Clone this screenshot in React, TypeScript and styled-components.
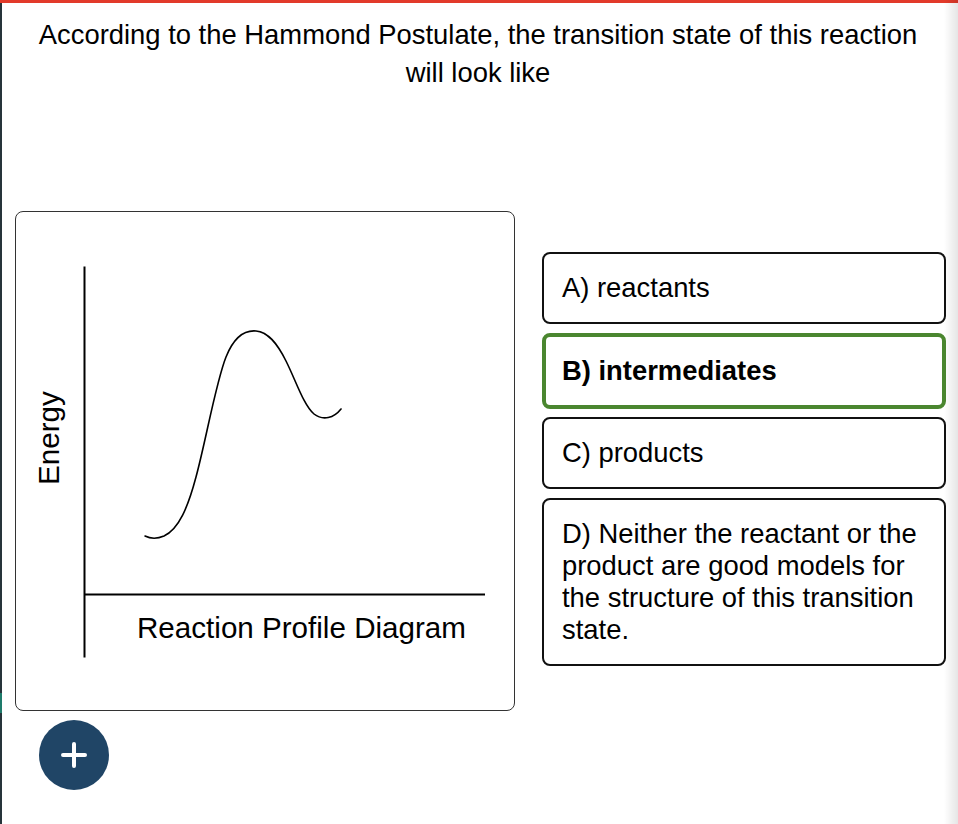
import React from "react";
import styled, { createGlobalStyle } from "styled-components";

const GlobalStyle = createGlobalStyle`
  * { box-sizing: border-box; }
  html, body { margin: 0; padding: 0; background: #ffffff; }
  body { font-family: "Liberation Sans", Arial, sans-serif; color: #000; }
`;

const Page = styled.div`
  position: relative;
  display: flex;
  flex-direction: column;
  width: 958px;
  height: 824px;
  overflow: hidden;
  background: #fff;
`;

const TopBar = styled.div`
  height: 3px;
  flex: 0 0 3px;
  background: #e23a2a;
`;

const Body = styled.div`
  flex: 1;
  display: flex;
  flex-direction: row;
`;

const SideRail = styled.div`
  width: 2px;
  flex: 0 0 2px;
  display: flex;
  flex-direction: column;
`;

const RailSegment = styled.div<{ $color: string; $height?: number }>`
  background: ${(p) => p.$color};
  ${(p) => (p.$height ? `flex: 0 0 ${p.$height}px;` : "flex: 1;")}
`;

const EdgeShade = styled.div`
  position: absolute;
  top: 0;
  right: 0;
  bottom: 0;
  width: 14px;
  pointer-events: none;
  background: linear-gradient(to right, rgba(0, 0, 0, 0), rgba(0, 0, 0, 0.1));
`;

const Main = styled.main`
  flex: 1;
  display: flex;
  flex-direction: column;
  padding-right: 4px;
`;

const Title = styled.h1`
  margin: 13px auto 0;
  max-width: 900px;
  font-size: 27.4px;
  line-height: 38px;
  font-weight: normal;
  text-align: center;
`;

const ContentRow = styled.div`
  display: flex;
  flex-direction: row;
  align-items: flex-start;
  gap: 27px;
  margin: 119px 0 0 13px;
`;

const DiagramCard = styled.div`
  width: 500px;
  height: 500px;
  border: 1px solid #333;
  border-radius: 8px;
  overflow: hidden;
  background: #fff;
  display: flex;
`;

const Options = styled.div`
  width: 404px;
  margin-top: 41px;
  display: flex;
  flex-direction: column;
  gap: 8.7px;
`;

const Option = styled.div<{ $selected?: boolean }>`
  border: ${(p) => (p.$selected ? "4px solid #4a862f" : "2px solid #111")};
  border-radius: 8px;
  padding: ${(p) => (p.$selected ? "18px 16px" : "18px 18px")};
  font-size: 27.4px;
  line-height: 32px;
  font-weight: ${(p) => (p.$selected ? "bold" : "normal")};
  background: #fff;
`;

const PlusButton = styled.button`
  margin: 9px 0 0 37px;
  width: 70px;
  height: 70px;
  border-radius: 50%;
  border: none;
  padding: 0;
  background: #204566;
  display: flex;
  align-items: center;
  justify-content: center;
  cursor: pointer;
`;

const DiagramText = styled.text`
  font-family: "Liberation Sans", Arial, sans-serif;
  font-size: 29.6px;
  fill: #000;
`;

const curvePath =
  "M129,324 C135,327 141,327 148,324 C163,317 172,295 180,265 " +
  "C190,228 200,170 210,145 C218,125 228,118 240,119 " +
  "C252,120 261,131 270,149 C280,169 288,194 298,202 " +
  "C307,209 318,206 325,197";

const ReactionDiagram: React.FC = () => (
  <svg width="498" height="498" viewBox="0 0 498 498">
    <line x1="68.5" y1="54.5" x2="68.5" y2="445.5" stroke="#000" strokeWidth="2" />
    <line x1="68.5" y1="382.5" x2="469" y2="382.5" stroke="#000" strokeWidth="2" />
    <path d={curvePath} fill="none" stroke="#000" strokeWidth="1.6" strokeLinecap="round" />
    <DiagramText x="121" y="426">Reaction Profile Diagram</DiagramText>
    <DiagramText transform="translate(43 226) rotate(-90)" textAnchor="middle">
      Energy
    </DiagramText>
  </svg>
);

const options = [
  { id: "a", label: "A) reactants" },
  { id: "b", label: "B) intermediates", selected: true },
  { id: "c", label: "C) products" },
  {
    id: "d",
    label:
      "D) Neither the reactant or the product are good models for the structure of this transition state.",
  },
];

export default function App() {
  return (
    <>
      <GlobalStyle />
      <Page>
        <TopBar />
        <Body>
          <SideRail>
            <RailSegment $color="#26343a" />
            <RailSegment $color="#1e7b6b" $height={20} />
            <RailSegment $color="#26343a" $height={111} />
          </SideRail>
          <Main>
            <Title>
              According to the Hammond Postulate, the transition state of this reaction will
              look like
            </Title>
            <ContentRow>
              <DiagramCard>
                <ReactionDiagram />
              </DiagramCard>
              <Options>
                {options.map((o) => (
                  <Option key={o.id} $selected={o.selected}>
                    {o.label}
                  </Option>
                ))}
              </Options>
            </ContentRow>
            <PlusButton aria-label="Add">
              <svg width="26" height="26" viewBox="0 0 26 26">
                <path
                  d="M13 2 V24 M2 13 H24"
                  stroke="#fff"
                  strokeWidth="4"
                  strokeLinecap="round"
                  fill="none"
                />
              </svg>
            </PlusButton>
          </Main>
        </Body>
        <EdgeShade />
      </Page>
    </>
  );
}
